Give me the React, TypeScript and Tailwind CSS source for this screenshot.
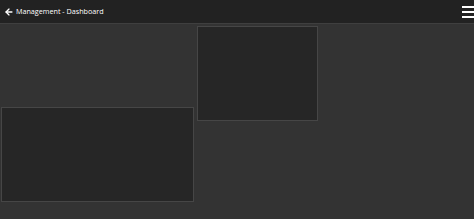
import { ArrowLeft } from 'lucide-react'

// dashboard widgets sit on a free canvas, so they keep their own coordinates
const WIDGETS = [
  { id: 'w1', cls: 'left-[197px] top-[2px] w-[121px] h-[95px]' },
  { id: 'w2', cls: 'left-[1px] top-[83px] w-[193px] h-[95px]' },
]

export default function App() {
  return (
    <div className="w-[474px] h-[219px] flex flex-col bg-[#333333] overflow-hidden" style={{ fontFamily: '"Open Sans", "Noto Sans", sans-serif' }}>
      {/* Header */}
      <div className="h-[24px] shrink-0 flex items-center bg-[#222222] border-b border-[#3f3f3f] pl-[4px] pr-0">
        <ArrowLeft className="w-[10px] h-[10px] text-white" strokeWidth={3.2} />
        <span className="ml-[2px] text-[7.2px] text-white leading-none">Management - Dashboard</span>
        <div className="ml-auto flex flex-col gap-[3px] w-[12px] mt-[1px]">
          <div className="h-[2px] bg-white" />
          <div className="h-[2px] bg-white" />
          <div className="h-[2px] bg-white" />
        </div>
      </div>

      {/* Canvas */}
      <div className="relative flex-1">
        {WIDGETS.map(w => (
          <div key={w.id} className={`absolute ${w.cls} bg-[#262626] border border-[#464646]`} />
        ))}
      </div>
    </div>
  )
}
